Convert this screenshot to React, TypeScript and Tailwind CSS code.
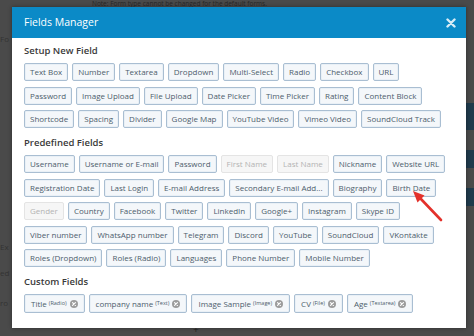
import clsx from "clsx";

type Field = { label: string; disabled?: boolean };

const setupRows: string[][] = [
  ["Text Box", "Number", "Textarea", "Dropdown", "Multi-Select", "Radio", "Checkbox", "URL"],
  ["Password", "Image Upload", "File Upload", "Date Picker", "Time Picker", "Rating", "Content Block"],
  ["Shortcode", "Spacing", "Divider", "Google Map", "YouTube Video", "Vimeo Video", "SoundCloud Track"],
];

const predefinedRows: Field[][] = [
  [
    { label: "Username" },
    { label: "Username or E-mail" },
    { label: "Password" },
    { label: "First Name", disabled: true },
    { label: "Last Name", disabled: true },
    { label: "Nickname" },
    { label: "Website URL" },
  ],
  [
    { label: "Registration Date" },
    { label: "Last Login" },
    { label: "E-mail Address" },
    { label: "Secondary E-mail Add..." },
    { label: "Biography" },
    { label: "Birth Date" },
  ],
  [
    { label: "Gender", disabled: true },
    { label: "Country" },
    { label: "Facebook" },
    { label: "Twitter" },
    { label: "LinkedIn" },
    { label: "Google+" },
    { label: "Instagram" },
    { label: "Skype ID" },
  ],
  [
    { label: "Viber number" },
    { label: "WhatsApp number" },
    { label: "Telegram" },
    { label: "Discord" },
    { label: "YouTube" },
    { label: "SoundCloud" },
    { label: "VKontakte" },
  ],
  [
    { label: "Roles (Dropdown)" },
    { label: "Roles (Radio)" },
    { label: "Languages" },
    { label: "Phone Number" },
    { label: "Mobile Number" },
  ],
];

const customFields = [
  { name: "Title", type: "Radio" },
  { name: "company name", type: "Text" },
  { name: "Image Sample", type: "Image" },
  { name: "CV", type: "File" },
  { name: "Age", type: "Textarea" },
];

const btnBase =
  "h-[18px] px-[5px] flex items-center rounded-[2px] border text-[8px] whitespace-nowrap";
const btnActive =
  "border-[#a9bed2] bg-[#f4f7fa] text-[#4d5d6c] shadow-[inset_0_0_0_1px_#e9f0f6]";

function FieldButton({ label, disabled }: Field) {
  return (
    <span
      className={clsx(
        btnBase,
        disabled ? "border-[#e4e4e4] bg-[#f6f6f6] text-[#b3b3b3]" : btnActive
      )}
    >
      {label}
    </span>
  );
}

function RemoveIcon() {
  return (
    <svg width="8" height="8" viewBox="0 0 10 10" className="ml-[3px]">
      <circle cx="5" cy="5" r="5" fill="#9c9c9c" />
      <path d="M3.2 3.2 L6.8 6.8 M6.8 3.2 L3.2 6.8" stroke="#fff" strokeWidth="1.5" strokeLinecap="round" />
    </svg>
  );
}

function Section({ title, children }: { title: string; children: React.ReactNode }) {
  return (
    <div className="flex flex-col gap-[6px]">
      <div className="h-[12px] leading-[12px] text-[9.5px] font-semibold text-[#3a3a3a]">
        {title}
      </div>
      {children}
    </div>
  );
}

export default function App() {
  return (
    <div
      className="relative w-[474px] h-[336px] overflow-hidden bg-[#4a4a4a]"
      style={{ fontFamily: '"Open Sans", "Noto Sans", sans-serif' }}
    >
      {/* dimmed page behind the overlay */}
      <div className="flex flex-col h-full">
        <div className="h-[7px] pl-[92px] text-[6.5px] leading-[7px] text-[#262626] whitespace-nowrap">
          Note: Form type cannot be changed for the default forms.
        </div>
        <div className="flex flex-1">
          <div className="w-[12px] flex flex-col text-[8px] text-[#333] overflow-hidden">
            <span className="mt-[26px]">Fo</span>
            <span className="mt-[196px]">Ex</span>
            <span className="mt-[14px]">ed</span>
            <span className="mt-[18px]">ro</span>
          </div>
          <div className="flex-1 flex flex-col items-start justify-end pl-[181px] pb-[2px]">
            <span className="text-[10px] leading-none text-[#222]">+</span>
          </div>
          <div className="w-[8px] flex flex-col gap-[20px] pt-[96px]">
            <div className="h-[27px] bg-[#1f3a4c]" />
            <div className="h-[18px] bg-[#1f3a4c]" />
            <div className="h-[18px] bg-[#1f3a4c]" />
          </div>
        </div>
      </div>

      {/* modal overlay */}
      <div className="absolute left-[12px] top-[7px] w-[454px] bg-white shadow-[0_0_4px_rgba(0,0,0,0.4)]">
        <div className="h-[31px] bg-[#0b8ac7] flex items-center justify-between pl-[12px] pr-[10px]">
          <span className="text-[10.5px] text-white">Fields Manager</span>
          <svg width="10" height="10" viewBox="0 0 10 10">
            <path d="M1.5 1.5 L8.5 8.5 M8.5 1.5 L1.5 8.5" stroke="#d8ecf6" strokeWidth="2.4" strokeLinecap="round" />
          </svg>
        </div>

        <div className="pt-[7px] px-[12px] pb-[15px] flex flex-col gap-[9px]">
          <Section title="Setup New Field">
            <div className="flex flex-col gap-[5.5px]">
              {setupRows.map((row, i) => (
                <div key={i} className="flex gap-[4px]">
                  {row.map((label) => (
                    <FieldButton key={label} label={label} />
                  ))}
                </div>
              ))}
            </div>
          </Section>

          <Section title="Predefined Fields">
            <div className="flex flex-col gap-[5.5px]">
              {predefinedRows.map((row, i) => (
                <div key={i} className="flex gap-[4px]">
                  {row.map((f) => (
                    <FieldButton key={f.label} {...f} />
                  ))}
                </div>
              ))}
            </div>
          </Section>

          <Section title="Custom Fields">
            <div className="flex gap-[4px]">
              {customFields.map((c) => (
                <span key={c.name} className={clsx(btnBase, btnActive, "h-[19px] px-[6px] text-[7.5px]")}>
                  {c.name}
                  <span className="ml-[2px] text-[5.5px]">({c.type})</span>
                  <RemoveIcon />
                </span>
              ))}
            </div>
          </Section>
        </div>
      </div>

      {/* red annotation arrow pointing at Birth Date */}
      <svg className="absolute left-[405px] top-[183px]" width="44" height="40" viewBox="0 0 44 40">
        <path d="M36 37 L15 15" stroke="#e3312b" strokeWidth="2.6" strokeLinecap="round" />
        <path d="M8 8 L19.5 12.5 L12.5 19.5 Z" fill="#e3312b" />
      </svg>
    </div>
  );
}
